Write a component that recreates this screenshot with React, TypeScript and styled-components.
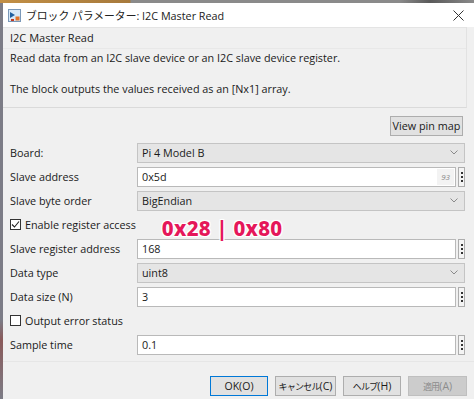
import * as React from "react";
import styled, {createGlobalStyle, css} from "styled-components";

const GlobalStyle = createGlobalStyle`
  html, body {
    margin: 0;
    padding: 0;
    background: #7a7a7a;
    overflow: hidden;
  }
  body {
    font-family: "Open Sans", "Noto Sans CJK JP", sans-serif;
    font-size: 10.8px;
    color: #1a1a1a;
  }
`;

const Backdrop = styled.div`
  width: 474px;
  height: 399px;
  box-sizing: border-box;
  padding: 3px 0 0 3px;
  background: linear-gradient(to right, #c28f45 0, #a77a3c 130px, #8a8a8a 131px, #8a8a8a 400px, #5a5a5a 430px, #8a8a8a 474px) top / 100% 3px no-repeat,
    linear-gradient(to bottom, #7c7c86 0, #7c7c86 320px, #8a5a5a 340px, #7c7c86 399px);
  overflow: hidden;
`;

const Dialog = styled.div`
  display: flex;
  flex-direction: column;
  height: 100%;
  background: #f0f0f0;
`;

const TitleBar = styled.div`
  height: 24px;
  flex-shrink: 0;
  display: flex;
  align-items: center;
  background: #ffffff;
  padding: 0 0 0 5px;
`;

const Title = styled.span`
  margin-left: 5px;
  font-size: 10.8px;
  color: #222;
  flex: 1;
`;

const CloseBox = styled.div`
  width: 30px;
  height: 24px;
  display: flex;
  align-items: center;
  justify-content: center;
  margin-right: 1px;
`;

const GroupPanel = styled.div`
  margin-right: 7px;
  border-right: 1px solid #e2e2e2;
  border-bottom: 1px solid #dadada;
`;

const GroupHeader = styled.div`
  height: 20px;
  line-height: 20px;
  padding-left: 7px;
  border-top: 1px solid #e4e4e4;
  border-bottom: 1px solid #e8e8e8;
  font-size: 11px;
  background: #f0f0f0;
`;

const Description = styled.div`
  padding: 1px 7px 10px;
  line-height: 15.5px;

  p {
    margin: 0;
  }
`;

const Params = styled.div`
  padding: 8px 9px 0 7px;
  display: flex;
  flex-direction: column;
`;

const ToolRow = styled.div`
  display: flex;
  justify-content: flex-end;
  padding-right: 2px;
  margin-bottom: 7px;
`;

const PushButton = styled.button<{$primary?: boolean; $disabled?: boolean; $w?: number}>`
  font: inherit;
  font-size: 10.8px;
  height: 20px;
  padding: 0;
  white-space: nowrap;
  box-sizing: border-box;
  background: #e1e1e1;
  border: 1px solid #adadad;
  color: #1a1a1a;
  margin: 0;
  ${p => p.$w && css`width: ${p.$w}px;`}
  ${p => p.$primary && css`
    border-color: #0078d7;
    box-shadow: inset 0 0 0 1px #e1e1e1;
  `}
  ${p => p.$disabled && css`
    background: #cccccc;
    border-color: #bfbfbf;
    color: #8c8c8c;
  `}
`;

const FooterButton = styled(PushButton)`
  font-size: 10.5px;
`;

const Kana = styled.span`
  font-size: 9px;
  letter-spacing: -0.8px;
`;

const FormGrid = styled.div`
  display: grid;
  grid-template-columns: 127px 1fr;
  grid-auto-rows: 20px;
  row-gap: 4px;
  align-items: center;
`;

const Label = styled.span`
  white-space: nowrap;
`;

const CheckRow = styled.label`
  grid-column: 1 / -1;
  display: flex;
  align-items: center;
  height: 20px;
  white-space: nowrap;
`;

const Box = styled.span`
  width: 11px;
  height: 11px;
  box-sizing: border-box;
  border: 1px solid #333;
  background: #fff;
  margin-right: 4px;
  display: flex;
  align-items: center;
  justify-content: center;
`;

const Annotation = styled.span`
  margin-left: 26px;
  font-family: "Noto Sans", "Open Sans", sans-serif;
  font-weight: 800;
  font-size: 20.5px;
  letter-spacing: 0.3px;
  color: #e5175a;
  text-shadow: -1px -1px 0 #fff, 1px -1px 0 #fff, -1px 1px 0 #fff, 1px 1px 0 #fff, 0 0 3px #fff;
  line-height: 20px;
  transform: translateY(3px);
`;

const ControlWrap = styled.div`
  display: flex;
  height: 20px;
  gap: 2px;
`;

const Select = styled.div`
  flex: 1;
  display: flex;
  align-items: center;
  justify-content: space-between;
  box-sizing: border-box;
  height: 20px;
  padding: 0 6px 0 4px;
  background: #e5e5e5;
  border: 1px solid #c4c4c4;
`;

const TextInput = styled.div`
  flex: 1;
  display: flex;
  align-items: center;
  justify-content: space-between;
  box-sizing: border-box;
  height: 20px;
  padding: 0 4px;
  background: #ffffff;
  border: 1px solid #b9b9b9;
`;

const Hint = styled.span`
  font-size: 8px;
  font-style: italic;
  color: #8a8a8a;
  background: #f3f3f3;
  padding: 0 4px;
  margin-right: -3px;
  line-height: 16px;
`;

const Kebab = styled.div`
  width: 7px;
  box-sizing: border-box;
  border: 1px solid #adadad;
  background: #f4f4f4;
  display: flex;
  flex-direction: column;
  align-items: center;
  justify-content: center;
  gap: 2px;

  i {
    width: 2px;
    height: 2px;
    background: #333;
  }
`;

const Footer = styled.div`
  margin-top: 6px;
  border-top: 1px solid #e6e6e6;
  display: flex;
  justify-content: flex-end;
  gap: 7px;
  padding: 14px 7px 0 0;
`;

const Chevron = () => (
    <svg width="8" height="5" viewBox="0 0 8 5">
        <polyline points="0.5,0.5 4,4 7.5,0.5" fill="none" stroke="#8a8a8a" strokeWidth="1"/>
    </svg>
);

const Check = () => (
    <svg width="9" height="9" viewBox="0 0 9 9">
        <polyline points="1,4.5 3.5,7 8,1.5" fill="none" stroke="#222" strokeWidth="1.1"/>
    </svg>
);

const AppIcon = () => (
    <svg width="13" height="13" viewBox="0 0 13 13">
        <rect x="0.5" y="0.5" width="12" height="12" fill="#d7e8f6" stroke="#7a98b8"/>
        <path d="M2 3 L7 6 L2 9 Z" fill="#1f5f9e"/>
        <rect x="7.5" y="7.5" width="4" height="4" fill="#e0742a"/>
        <rect x="3" y="10" width="3" height="2" fill="#c23b22"/>
    </svg>
);

const CloseIcon = () => (
    <svg width="11" height="11" viewBox="0 0 11 11">
        <path d="M0.5 0.5 L10.5 10.5 M10.5 0.5 L0.5 10.5" stroke="#333" strokeWidth="1"/>
    </svg>
);

const Dropdown = (props: { value: string }) => (
    <ControlWrap>
        <Select>{props.value}<Chevron/></Select>
    </ControlWrap>
);

const Field = (props: { value: string, hint?: string }) => (
    <ControlWrap>
        <TextInput>
            <span>{props.value}</span>
            {props.hint && <Hint>{props.hint}</Hint>}
        </TextInput>
        <Kebab><i/><i/><i/></Kebab>
    </ControlWrap>
);

export default class App extends React.Component {
    public render(): React.ReactNode {
        return <>
            <GlobalStyle/>
            <Backdrop>
                <Dialog>
                    <TitleBar>
                        <AppIcon/>
                        <Title>ブロック パラメーター: I2C Master Read</Title>
                        <CloseBox><CloseIcon/></CloseBox>
                    </TitleBar>
                    <GroupPanel>
                        <GroupHeader>I2C Master Read</GroupHeader>
                        <Description>
                            <p>Read data from an I2C slave device or an I2C slave device register.</p>
                            <p>&nbsp;</p>
                            <p>The block outputs the values received as an [Nx1] array.</p>
                        </Description>
                    </GroupPanel>
                    <Params>
                        <ToolRow>
                            <PushButton $w={73}>View pin map</PushButton>
                        </ToolRow>
                        <FormGrid>
                            <Label>Board:</Label>
                            <Dropdown value="Pi 4 Model B"/>
                            <Label>Slave address</Label>
                            <Field value="0x5d" hint="93"/>
                            <Label>Slave byte order</Label>
                            <Dropdown value="BigEndian"/>
                            <CheckRow>
                                <Box><Check/></Box>
                                Enable register access
                                <Annotation>0x28 | 0x80</Annotation>
                            </CheckRow>
                            <Label>Slave register address</Label>
                            <Field value="168"/>
                            <Label>Data type</Label>
                            <Dropdown value="uint8"/>
                            <Label>Data size (N)</Label>
                            <Field value="3"/>
                            <CheckRow>
                                <Box/>
                                Output error status
                            </CheckRow>
                            <Label>Sample time</Label>
                            <Field value="0.1"/>
                        </FormGrid>
                    </Params>
                    <Footer>
                        <FooterButton $primary $w={58}>OK(O)</FooterButton>
                        <FooterButton $w={61}><Kana>キャンセル</Kana>(C)</FooterButton>
                        <FooterButton $w={58}><Kana>ヘルプ</Kana>(H)</FooterButton>
                        <FooterButton $disabled $w={59}><Kana>適用</Kana>(A)</FooterButton>
                    </Footer>
                </Dialog>
            </Backdrop>
        </>;
    }
}
